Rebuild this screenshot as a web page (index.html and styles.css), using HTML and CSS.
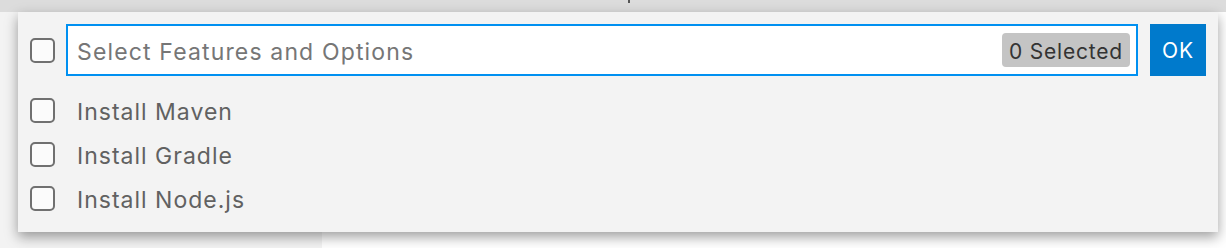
FILE: index.html
```html
<!DOCTYPE html>
<html>
<head>
<meta charset="utf-8">
<link rel="stylesheet" href="styles.css">
</head>
<body>
<div class="titlebar"><span class="title-mark"></span></div>
<div class="stage">
  <div class="quick-input">
    <div class="header">
      <span class="checkbox"></span>
      <div class="input-box">
        <span class="placeholder">Select Features and Options</span>
        <span class="badge">0 Selected</span>
      </div>
      <button class="ok">OK</button>
    </div>
    <ul class="list">
      <li class="row"><span class="checkbox"></span><span class="label">Install Maven</span></li>
      <li class="row"><span class="checkbox"></span><span class="label">Install Gradle</span></li>
      <li class="row"><span class="checkbox"></span><span class="label">Install Node.js</span></li>
    </ul>
  </div>
</div>
</body>
</html>
```
FILE: styles.css
```css
html, body {
  margin: 0;
  padding: 0;
  width: 1226px;
  height: 248px;
  overflow: hidden;
  font-family: Inter, "Noto Sans", "Liberation Sans", sans-serif;
  background: #ffffff;
}
.titlebar {
  height: 12px;
  background: #dcdcdc;
  display: flex;
  justify-content: center;
}
.title-mark {
  width: 2px;
  height: 3px;
  background: #555;
  margin-left: 32px;
}
.stage {
  height: 236px;
  background: linear-gradient(to right, #f3f3f3 0, #f3f3f3 322px, #ffffff 322px);
  padding-left: 18px;
  box-sizing: border-box;
}
.quick-input {
  width: 1200px;
  background: #f3f3f3;
  box-shadow: 0 5px 12px rgba(0, 0, 0, 0.38);
  padding: 12px 12px 12px 12px;
  box-sizing: border-box;
}
.header {
  display: flex;
  align-items: center;
  height: 52px;
}
.checkbox {
  width: 25px;
  height: 25px;
  box-sizing: border-box;
  border: 2px solid #707070;
  border-radius: 5px;
  background: #fbfbfb;
  flex: none;
}
.input-box {
  margin-left: 11px;
  flex: 1;
  height: 52px;
  box-sizing: border-box;
  border: 2px solid #0090f1;
  background: #ffffff;
  display: flex;
  align-items: center;
  padding: 0 6px 0 9px;
}
.placeholder {
  flex: 1;
  font-size: 23px;
  color: #767676;
  letter-spacing: 1.15px;
  padding-top: 3px;
}
.badge {
  background: #c4c4c4;
  color: #333333;
  border-radius: 4px;
  height: 34px;
  width: 128px;
  box-sizing: border-box;
  padding-top: 3px;
  display: flex;
  align-items: center;
  justify-content: center;
  font-size: 21px;
  letter-spacing: 0.8px;
}
.ok {
  margin-left: 12px;
  width: 56px;
  height: 52px;
  border: none;
  background: #007acc;
  color: #ffffff;
  font-family: inherit;
  font-size: 21px;
  letter-spacing: 0.8px;
  padding: 0;
}
.list {
  list-style: none;
  margin: 12px 0 0 0;
  padding: 0;
}
.row {
  height: 44px;
  display: flex;
  align-items: center;
}
.label {
  margin-left: 22px;
  font-size: 23px;
  color: #616161;
  letter-spacing: 1px;
  padding-top: 3px;
}
```
